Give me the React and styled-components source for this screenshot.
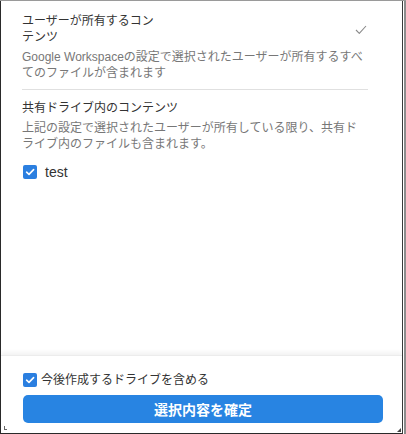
import React, { useState } from 'react';
import styled, { createGlobalStyle } from 'styled-components';

const GlobalStyle = createGlobalStyle`
    html, body {
        margin: 0;
        padding: 0;
        background: #fff;
    }
    body {
        font-family: "Liberation Sans", "Noto Sans CJK JP", sans-serif;
        -webkit-font-smoothing: antialiased;
    }
`;

function CheckIcon({ color = '#fff' }) {
    return (
        <svg width="10" height="10" viewBox="0 0 10 10" fill="none">
            <polyline points="1.6,5.2 4,7.4 8.6,2.6" stroke={color} strokeWidth="1.6" strokeLinecap="round" strokeLinejoin="round" />
        </svg>
    );
}

function Checkbox({ checked, onToggle }) {
    return (
        <Box $checked={checked} onClick={onToggle}>
            {checked && <CheckIcon />}
        </Box>
    );
}

export default function App() {
    const [shared, setShared] = useState(true);
    const [future, setFuture] = useState(true);

    return (
        <>
            <GlobalStyle />
            <Frame>
                <Window>
                    <Scroll>
                        <HeadRow>
                            <Title $narrow>ユーザーが所有するコンテンツ</Title>
                            <Tick>
                                <svg width="12" height="10" viewBox="0 0 12 10" fill="none">
                                    <polyline points="1,5 4.3,8.4 11,1" stroke="#8a8a8a" strokeWidth="1.1" strokeLinejoin="round" />
                                </svg>
                            </Tick>
                        </HeadRow>
                        <Desc>Google Workspaceの設定で選択されたユーザーが所有するすべてのファイルが含まれます</Desc>
                        <Divider />
                        <Title>共有ドライブ内のコンテンツ</Title>
                        <Desc>上記の設定で選択されたユーザーが所有している限り、共有ドライブ内のファイルも含まれます。</Desc>
                        <DriveRow>
                            <Checkbox checked={shared} onToggle={() => setShared((p) => !p)} />
                            <DriveName>test</DriveName>
                        </DriveRow>
                    </Scroll>
                    <Footer>
                        <OptionRow>
                            <Checkbox checked={future} onToggle={() => setFuture((p) => !p)} />
                            <OptionLabel>今後作成するドライブを含める</OptionLabel>
                        </OptionRow>
                        <Confirm>選択内容を確定</Confirm>
                    </Footer>
                    <GripLeft />
                    <GripRight />
                </Window>
                <Edge />
            </Frame>
        </>
    );
}

const Frame = styled.div`
    width: 406px;
    height: 434px;
    box-sizing: border-box;
    border-top: 1px solid #9a9a9a;
    display: flex;
    overflow: hidden;
`;

const Window = styled.div`
    position: relative;
    width: 403px;
    box-sizing: border-box;
    border-left: 1px solid #2a2a2a;
    border-right: 1px solid #3a3a3a;
    border-bottom: 1px solid #2a2a2a;
    display: flex;
    flex-direction: column;
    background: #fff;
`;

const Edge = styled.div`
    width: 3px;
    box-sizing: border-box;
    border-left: 1px solid #fff;
    background: #8c8c8c;
`;

const Scroll = styled.div`
    flex: 1;
    padding: 12px 34px 0 21px;
`;

const HeadRow = styled.div`
    display: flex;
    align-items: center;
    justify-content: space-between;
`;

const Title = styled.div`
    width: ${(p) => (p.$narrow ? '140px' : 'auto')};
    font-size: 12px;
    line-height: 16px;
    color: #333;
    margin-top: ${(p) => (p.$narrow ? '0' : '10px')};
`;

const Tick = styled.div`
    display: flex;
    padding-right: 1px;
    margin-top: 2px;
`;

const Desc = styled.div`
    margin-top: 4px;
    font-size: 12px;
    line-height: 16px;
    color: #777;
`;

const Divider = styled.div`
    height: 1px;
    background: #e0e0e0;
    margin-top: 8px;
`;

const Box = styled.span`
    width: 14px;
    height: 14px;
    border-radius: 2px;
    box-sizing: border-box;
    flex-shrink: 0;
    display: inline-flex;
    align-items: center;
    justify-content: center;
    background: ${(p) => (p.$checked ? '#2b7fe0' : '#fff')};
    border: ${(p) => (p.$checked ? 'none' : '1px solid #999')};
    cursor: pointer;
`;

const DriveRow = styled.div`
    display: flex;
    align-items: center;
    gap: 8px;
    margin-top: 11px;
    padding-left: 1px;
`;

const DriveName = styled.span`
    font-size: 14px;
    line-height: 18px;
    color: #333;
`;

const Footer = styled.div`
    display: flex;
    flex-direction: column;
    gap: 7px;
    padding: 16px 19px 10px 21px;
    border-top: 1px solid #ececec;
    box-shadow: 0 -3px 4px rgba(0, 0, 0, 0.05);
`;

const OptionRow = styled.div`
    display: flex;
    align-items: center;
    gap: 4px;
    padding-left: 1px;
    height: 16px;
`;

const OptionLabel = styled.span`
    font-size: 12px;
    line-height: 16px;
    color: #333;
`;

const Confirm = styled.button`
    height: 28px;
    border: none;
    border-radius: 5px;
    background: #2884e2;
    color: #fff;
    font-family: inherit;
    font-size: 14px;
    font-weight: bold;
    cursor: pointer;
    margin-left: 1px;
`;

const GripLeft = styled.span`
    position: absolute;
    left: 3px;
    bottom: 3px;
    width: 2px;
    height: 3px;
    border-left: 1px solid #666;
    border-bottom: 1px solid #666;
`;

const GripRight = styled.span`
    position: absolute;
    right: 1px;
    bottom: 1px;
    width: 0;
    height: 0;
    border-left: 4px solid transparent;
    border-bottom: 4px solid #444;
`;
